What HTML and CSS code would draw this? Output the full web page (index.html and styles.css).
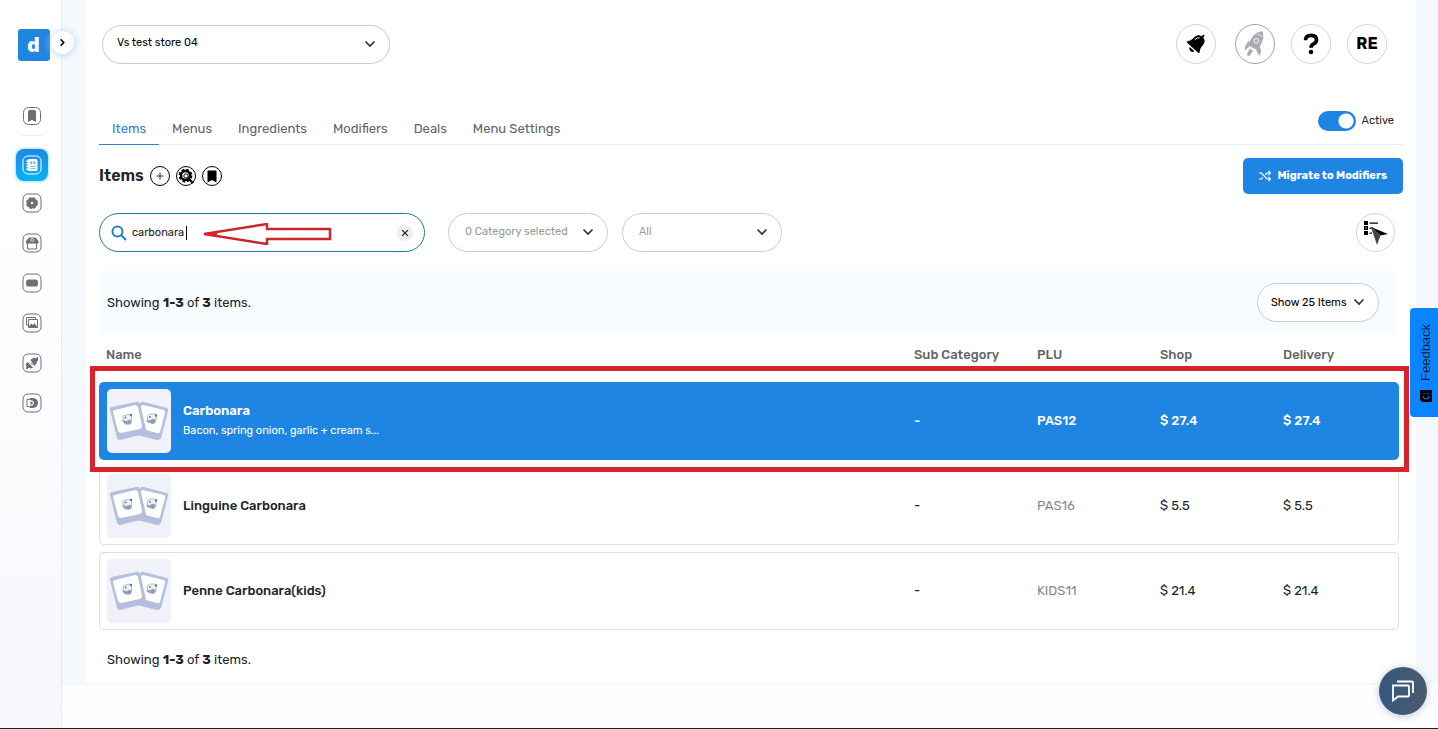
FILE: index.html
```html
<!DOCTYPE html>
<html lang="en">
<head>
    <meta charset="UTF-8">
    <meta name="viewport" content="width=device-width, initial-scale=1">
    <title>Items</title>
    <link rel="stylesheet" href="styles.css">
</head>
<body>
<svg class="defs" aria-hidden="true">
    <symbol id="chevron" viewBox="0 0 12 12"><path d="M1.500 3.500 6 8l4.500-4.500" fill="none" stroke="currentColor" stroke-width="1.700"/></symbol>
    <symbol id="bookmark" viewBox="0 0 12 12"><path d="M1.500 0h9v12L6 9.500 1.500 12z" fill="currentColor"/></symbol>
    <symbol id="thumb" viewBox="0 0 64 64">
        <g fill="#b4bfdd">
            <path d="M33 15 Q34 12 37 13 L60 19 Q62 20 61 22 L54 49 Q53 51 50 51 L30 46z"/>
            <path d="M3 21 Q2 19 5 18 L29 13 Q32 12 33 15 L39 43 Q39 45 37 45 L13 51 Q11 51 10 49z"/>
        </g>
        <path d="M6 23 Q6 21 8 21 L28 16 Q30 16 31 18 L35 37 Q35 39 33 40 L14 44 Q12 44 11 42z" fill="#fff"/>
        <path d="M34 18 Q34 16 36 16 L57 21 Q59 22 58 24 L53 43 Q52 45 50 44 L39 41z" fill="#fff"/>
        <g stroke="#a3adc6" stroke-width=".8">
            <path d="M16 27l6-2 2.500 2v6l-1.500 2h-5l-2-2z" fill="#eef1f8"/>
            <path d="M16 31q3 2 4.500 1 2-2 4 0l-1 3h-5l-2-2z" fill="#8f99b4"/>
            <path d="M40.500 27l2-2h6l1 2-1 6-2 1.500-6-2z" fill="#eef1f8"/>
            <path d="M40 31q3 1 4 0 2-2 4.500 0l-1 3-1.500.7-6-2z" fill="#8f99b4"/>
        </g>
        <circle cx="18.500" cy="28.500" r=".9" fill="#66718f"/>
        <circle cx="24" cy="26" r="1.200" fill="#66718f"/>
        <circle cx="43" cy="28" r=".9" fill="#66718f"/>
        <circle cx="49" cy="26.500" r="1.200" fill="#66718f"/>
    </symbol>
</svg>
<div class="app">
    <aside class="sidebar">
        <a class="logo" href="#">d</a>
        <button class="expand" aria-label="Expand menu"><svg viewBox="0 0 12 12"><path d="M4.500 3.500 7 6 4.500 8.500" fill="none" stroke="#000" stroke-width="1.200"/></svg></button>
        <nav class="side-nav">
            <a class="saved" href="#" aria-label="Bookmarks"><svg viewBox="0 0 20 20"><rect x="1.500" y="1.500" width="17" height="17" rx="5" fill="none" stroke="currentColor"/><path d="M6 5.500q0-1.500 1.500-1.500h5q1.500 0 1.500 1.500V16l-4-2-4 2z" fill="currentColor"/></svg></a>
            <a class="active" href="#" aria-label="Products"><svg viewBox="0 0 20 20"><rect x="1" y="1" width="18" height="18" rx="5" fill="none" stroke="currentColor"/><rect x="5.500" y="4" width="10" height="12" rx="1.500" fill="currentColor"/><path d="M4 6h3M4 8.700h3M4 11.300h3M4 14h3" stroke="currentColor"/><path d="M9.500 6.500v3M12.500 6.500v3M8.500 6.500v1.500h2M11.500 6.500v1.500h2M8.500 11.500h5M8.500 13.500h5" stroke="#3aa9ea" stroke-width=".7" fill="none"/></svg></a>
            <a href="#" aria-label="Settings"><svg viewBox="0 0 20 20"><rect x="1" y="1" width="18" height="18" rx="5" fill="none" stroke="currentColor"/><circle cx="10" cy="10" r="3.200" fill="none" stroke="currentColor" stroke-width="4"/><circle cx="10" cy="10" r="5" fill="none" stroke="currentColor" stroke-width="2" stroke-dasharray="2.700 1.230"/></svg></a>
            <a href="#" aria-label="Stores"><svg viewBox="0 0 20 20"><rect x="1" y="1" width="18" height="18" rx="5" fill="none" stroke="currentColor"/><path d="M4 10.500V8L7 4.500h6.500L16.500 8v2.500z" fill="currentColor"/><path d="M5.500 10v6h9v-6" fill="none" stroke="currentColor"/><circle cx="10.200" cy="7" r="1.500" fill="none" stroke="#fff" stroke-width=".7"/></svg></a>
            <a href="#" aria-label="Cards"><svg viewBox="0 0 20 20"><rect x="1" y="1" width="18" height="18" rx="5" fill="none" stroke="currentColor"/><rect x="4" y="6.500" width="12" height="7" rx="2.500" fill="currentColor"/></svg></a>
            <a href="#" aria-label="Gallery"><svg viewBox="0 0 20 20"><rect x="1" y="1" width="18" height="18" rx="5" fill="none" stroke="currentColor"/><path d="M13.500 6V4.500H4.500v7.500H6M6.500 6.500h9v8h-9z" fill="none" stroke="currentColor"/><path d="m6.500 14.500 2.500-4 2 1.500 1.500-2 3 4.500z" fill="currentColor"/></svg></a>
            <a href="#" aria-label="Integrations"><svg viewBox="0 0 20 20"><rect x="1" y="1" width="18" height="18" rx="5" fill="none" stroke="currentColor"/><path d="m9 7 3-2 1 1 2.500-1.500V7.500L14 8.500l.5 1-2 3zM5.500 9.500l5 5-2.500.5-1-1L4.500 16l.5-3-1-1zM8 9.500l2.500 2.500" fill="currentColor" stroke="currentColor"/></svg></a>
            <a href="#" aria-label="Tutorials"><svg viewBox="0 0 20 20"><rect x="1" y="1" width="18" height="18" rx="5" fill="none" stroke="currentColor"/><path d="M8 5h3a5 5 0 0 1 0 10H8l-1-2q5 0 5-3t-5-3z" fill="currentColor"/><path d="M7 6.500H5v7h2" fill="none" stroke="currentColor"/><path d="m8.500 8 3 2-3 2z" fill="currentColor"/></svg></a>
        </nav>
    </aside>

    <main class="main">
        <div class="card">
            <header class="topbar">
                <div class="picker store">
                    <select aria-label="Store"><option>Vs test store 04</option></select>
                    <svg><use href="#chevron"/></svg>
                </div>
                <div class="top-actions">
                    <button class="round" aria-label="Notifications"><svg viewBox="0 0 24 24"><g transform="rotate(42 12 12)"><path d="M12 1.500c4.500 0 6.500 3 6.500 7 0 4 1 5 2.500 7.500q.5 1.500-1 1.500H4q-1.500 0-1-1.500C4.500 13.500 5.500 12.500 5.500 8.500c0-4 2-7 6.500-7z"/><path d="M9 19h7q-1 3-3.500 3T9 19zM11-1h2v3h-2z"/><path d="M8 9.500Q8 5.500 10.500 4.500" fill="none" stroke="#fff"/></g></svg></button>
                    <button class="round rocket" aria-label="What's new"><svg viewBox="0 0 24 28"><g fill="#a9adb1"><path d="M20 0q2 7 0 11-2 5-5 10l-10-5q1-6 5-11 4-4 10-5z"/><path d="M6 10Q1 14 1 21l5-4zM17 17q3 4 0 10l-4-6zM6 19l4 2-4 6-3-1z"/></g><circle cx="13.500" cy="10.500" r="2.500" fill="none" stroke="#fff"/><path d="m14 3 6 3M5 16.500l9 4.500" stroke="#fff" stroke-width=".7"/></svg></button>
                    <button class="round help" aria-label="Help"><svg viewBox="0 0 16 24"><path d="M2 8Q2 2.500 8 2.500t6 5q0 3-3.500 4.500Q8 13.500 8 16" fill="none" stroke="#000" stroke-width="4"/><circle cx="8" cy="20.700" r="2.500"/></svg></button>
                    <button class="round user">RE</button>
                </div>
            </header>

            <div class="tab-bar">
                <nav class="tabs">
                    <a class="selected" href="#">Items</a>
                    <a href="#">Menus</a>
                    <a href="#">Ingredients</a>
                    <a href="#">Modifiers</a>
                    <a href="#">Deals</a>
                    <a href="#">Menu Settings</a>
                </nav>
                <label class="switch"><input type="checkbox" checked>Active</label>
            </div>

            <div class="title-row">
                <h1>Items</h1>
                <button class="mini" aria-label="Add item"><svg viewBox="0 0 12 12"><path d="M6 2.500v7M2.500 6h7" stroke="#333"/></svg></button>
                <button class="mini" aria-label="Item settings"><svg class="gear" viewBox="0 0 16 16"><circle cx="7.500" cy="7.500" r="4.500" fill="none" stroke="#000" stroke-width="2.400"/><circle cx="7.500" cy="7.500" r="6" fill="none" stroke="#000" stroke-width="1.800" stroke-dasharray="2.900 1.810"/><circle cx="8" cy="8" r="2.200" fill="none" stroke="#000"/><path d="m9.500 9.500 5.500 5.500" stroke="#000" stroke-width="2.200"/></svg></button>
                <button class="mini" aria-label="Save view"><svg class="mark"><use href="#bookmark"/></svg></button>
                <button class="migrate"><svg viewBox="0 0 12 12"><path d="M0 3h2.500L8 9h3M0 9h2.500l1.500-1.700M6.200 4.700 8 3h3M9.500 1l2 2-2 2M9.500 7l2 2-2 2" fill="none" stroke="#fff" stroke-width="1.200"/></svg>Migrate to Modifiers</button>
            </div>

            <div class="filters">
                <div class="search">
                    <svg class="glass" viewBox="0 0 16 16"><circle cx="6.500" cy="6.500" r="5" fill="none" stroke="#1c83c6" stroke-width="2"/><path d="m10 10 5 5" stroke="#1c83c6" stroke-width="2"/></svg>
                    <input type="text" aria-label="Search items" value="carbonara">
                    <span class="caret"></span>
                    <button class="clear" aria-label="Clear search"><svg viewBox="0 0 12 12"><path d="m2.500 2.500 7 7M9.500 2.500l-7 7" stroke="#222" stroke-width="1.500"/></svg></button>
                    <svg class="arrow" viewBox="0 0 130 22"><path d="M2 11 65 1v5h63v10H65v5z" fill="none" stroke="#c9262d" stroke-width="2.500"/><path d="m2 11 13-2v4z" fill="#ec1c24"/></svg>
                </div>
                <div class="picker category">
                    <select aria-label="Category"><option>0 Category selected</option></select>
                    <svg><use href="#chevron"/></svg>
                </div>
                <div class="picker">
                    <select aria-label="Status"><option>All</option></select>
                    <svg><use href="#chevron"/></svg>
                </div>
                <button class="round bulk" aria-label="Bulk select"><svg viewBox="0 0 24 24"><path d="M0 0h4v4H0zM0 10h4v4H0zM5.500 1.500H14v1.200H5.500zM5.500 6.500H9v1.200H5.500zM5.500 11.500H8v1.200H5.500z"/><path d="M.7 5.700h2.600v2.600H.7z" fill="none" stroke="#000" stroke-width="1.400"/><path d="m7 6 17 7-7.500 1.500z"/><path d="m7 6 9.500 8.500L13 24z" fill="#444"/></svg></button>
            </div>

            <div class="summary">
                <p>Showing <b>1-3</b> of <b>3</b> items.</p>
                <div class="picker page-size">
                    <select aria-label="Items per page"><option>Show 25 Items</option></select>
                    <svg><use href="#chevron"/></svg>
                </div>
            </div>

            <div class="list">
                <table>
                    <thead>
                    <tr>
                        <th>Name</th>
                        <th class="col">Sub Category</th>
                        <th class="col">PLU</th>
                        <th class="col">Shop</th>
                        <th class="col">Delivery</th>
                    </tr>
                    </thead>
                    <tbody>
                    <tr class="picked">
                        <td>
                            <div class="item">
                                <svg class="thumb"><use href="#thumb"/></svg>
                                <div>
                                    <strong>Carbonara</strong>
                                    <small>Bacon, spring onion, garlic + cream s...</small>
                                </div>
                            </div>
                        </td>
                        <td>-</td>
                        <td class="plu">PAS12</td>
                        <td>$ 27.4</td>
                        <td>$ 27.4</td>
                    </tr>
                    <tr>
                        <td>
                            <div class="item">
                                <svg class="thumb"><use href="#thumb"/></svg>
                                <strong>Linguine Carbonara</strong>
                            </div>
                        </td>
                        <td>-</td>
                        <td class="plu">PAS16</td>
                        <td>$ 5.5</td>
                        <td>$ 5.5</td>
                    </tr>
                    <tr>
                        <td>
                            <div class="item">
                                <svg class="thumb"><use href="#thumb"/></svg>
                                <strong>Penne Carbonara(kids)</strong>
                            </div>
                        </td>
                        <td>-</td>
                        <td class="plu">KIDS11</td>
                        <td>$ 21.4</td>
                        <td>$ 21.4</td>
                    </tr>
                    </tbody>
                </table>
                <div class="highlight"></div>
            </div>
            <p class="total">Showing <b>1-3</b> of <b>3</b> items.</p>
        </div>
    </main>
</div>

<button class="feedback"><svg viewBox="0 0 12 12"><path d="M0 0h12v12H2L0 10z"/><path d="M3 6q0 3 3 3t3-3M4 3v1.500M8 3v1.500" fill="none" stroke="#0a84ff"/></svg>Feedback</button>
<button class="chat" aria-label="Open chat"><svg viewBox="0 0 24 24"><path d="M2 6.500h15q1 0 1 1v9q0 1-1 1H7L2 21.500zM6 2.500h15q1 0 1 1V14" fill="none" stroke="#fff" stroke-width="1.800"/></svg></button>
</body>
</html>
```
FILE: styles.css
```css
*{
    box-sizing: border-box;
    margin: 0;
    padding: 0;
}
body{
    font-family: Rubik, Roboto, "Liberation Sans", sans-serif;
    font-size: 13px;
    line-height: 20px;
    color: #212529;
    background: #fefefe;
}
button, input, select{
    font: inherit;
    color: inherit;
    background: none;
    border: 0;
    outline: 0;
}
button{
    cursor: pointer;
}
a{
    color: inherit;
    text-decoration: none;
}
b{
    font-weight: 700;
}
.defs{
    display: none;
}
.app{
    display: flex;
    min-height: 100vh;
    border-bottom: 1px solid #222;
}

/* sidebar */
.sidebar{
    position: relative;
    display: flex;
    flex-direction: column;
    align-items: center;
    flex: none;
    width: 62px;
    padding: 29px 0 0 2px;
    background: linear-gradient(#fff 30%, #f5f7fb);
    border-right: 1px solid #e1ebf5;
}
.logo{
    width: 32px;
    height: 32px;
    margin-left: 4px;
    border-radius: 3px;
    background: #1e86e2;
    color: #fff;
    font: 800 20px/32px "Open Sans", sans-serif;
    text-align: center;
}
.expand{
    position: absolute;
    top: 31px;
    right: -13px;
    width: 23px;
    height: 23px;
    border-radius: 50%;
    background: #fff;
    box-shadow: 0 1px 8px #b9cfe4;
}
.expand svg{
    display: block;
    width: 15px;
    margin: auto;
}
.side-nav{
    display: flex;
    flex-direction: column;
    align-items: center;
    gap: 20px;
    margin-top: 45px;
    color: #6b7077;
}
.side-nav a{
    display: flex;
    width: 20px;
    height: 20px;
}
.side-nav svg{
    width: 20px;
    height: 20px;
}
.side-nav .saved{
    width: 32px;
    height: 30px;
    padding: 0 6px;
    border-bottom: 1px solid #eee;
    border-radius: 8px;
    margin-bottom: -7px;
}
.side-nav .active{
    width: 32px;
    height: 32px;
    padding: 6px;
    margin-bottom: -8px;
    border-radius: 8px;
    background: linear-gradient(#1e88e5, #04b4f0);
    box-shadow: 0 0 3px #38c4f8;
    color: #fff;
}

/* page */
.main{
    flex: 1;
    min-width: 0;
}
.card{
    background: #fff;
    padding: 24px 13px 0;
    border: solid #f5f9fe;
    border-width: 0 22px 2px 24px;
}
.topbar{
    display: flex;
    align-items: center;
    justify-content: space-between;
    padding: 0 16px 0 3px;
}
.top-actions{
    display: flex;
    gap: 16px;
}
.round{
    display: flex;
    align-items: center;
    justify-content: center;
    width: 40px;
    height: 40px;
    border: 1px solid #d6d6d6;
    border-radius: 50%;
}
.round svg{
    width: 22px;
    height: 22px;
}
.rocket{
    border-color: #a0a0a0;
    margin-left: 3px;
}
.rocket svg{
    width: 24px;
    height: 26px;
}
.user{
    color: #000;
    font-size: 16px;
    font-weight: 700;
}
.picker{
    position: relative;
    width: 160px;
    color: #999;
}
.picker select{
    display: block;
    appearance: none;
    width: 100%;
    height: 39px;
    padding: 0 36px 2px 16px;
    border: 1px solid #cacaca;
    border-radius: 20px;
    font-size: 11px;
}
.picker svg{
    position: absolute;
    top: 13px;
    right: 14px;
    width: 12px;
    height: 12px;
    color: #333;
    pointer-events: none;
}
.store{
    width: 288px;
    color: #000;
}
.store select{
    padding-left: 14px;
}

/* tabs */
.tab-bar{
    display: flex;
    justify-content: space-between;
    height: 34px;
    margin-top: 47px;
    border-bottom: 1px solid #e9edf0;
}
.tabs{
    display: flex;
}
.tabs a{
    height: 34px;
    padding: 8px 13px 0;
    color: #5f6368;
}
.tabs .selected{
    color: #2b83c6;
    border-bottom: 1px solid #2b83c6;
}
.switch{
    display: flex;
    gap: 6px;
    height: 20px;
    padding-right: 9px;
    font-size: 11px;
}
.switch input{
    appearance: none;
    width: 38px;
    height: 20px;
    border-radius: 10px;
    background: radial-gradient(circle at 28px 10px, #fff 7px, #1e86e2 8px);
}

/* title and filters */
.title-row{
    display: flex;
    align-items: center;
    gap: 6px;
    margin-top: 13px;
}
h1{
    font-size: 16px;
    font-weight: 600;
}
.mini{
    display: flex;
    align-items: center;
    justify-content: center;
    width: 20px;
    height: 20px;
    border: 1px solid #000;
    border-radius: 50%;
    color: #000;
}
.mini svg{
    width: 12px;
    height: 12px;
}
.mini .gear{
    width: 16px;
    height: 16px;
    flex: none;
}
.mini .mark{
    height: 13px;
}
.migrate{
    display: flex;
    align-items: center;
    gap: 6px;
    height: 36px;
    margin-left: auto;
    padding: 0 16px;
    border-radius: 5px;
    background: #1e86e2;
    color: #fff;
    font-size: 11px;
    font-weight: 700;
}
.migrate svg{
    width: 12px;
    height: 12px;
}
.filters{
    display: flex;
    gap: 14px;
    margin-top: 19px;
    padding-right: 8px;
}
.search{
    position: relative;
    display: flex;
    align-items: center;
    width: 326px;
    height: 39px;
    padding: 0 11px;
    border: 1px solid #23759f;
    border-radius: 20px;
}
.search input{
    flex: 1;
    min-width: 0;
    padding-left: 5px;
    font-size: 11px;
}
.glass{
    width: 16px;
    height: 16px;
}
.caret{
    position: absolute;
    left: 86px;
    top: 12px;
    width: 1px;
    height: 14px;
    background: #000;
}
.clear{
    width: 16px;
    height: 16px;
    border-radius: 50%;
    background: #eee;
}
.clear svg{
    display: block;
    width: 10px;
    margin: auto;
}
.arrow{
    position: absolute;
    left: 102px;
    top: 9px;
    width: 130px;
    height: 22px;
}
.category{
    margin-left: 9px;
}
.bulk{
    width: 39px;
    height: 39px;
    margin-left: auto;
}
.bulk svg{
    width: 24px;
    height: 24px;
}
.summary{
    display: flex;
    align-items: center;
    justify-content: space-between;
    margin: 19px 8px 0 0;
    padding: 12px 16px 12px 8px;
    background: #f6fcff;
}
.page-size{
    width: 122px;
    color: #000;
    background: #fff;
    border-radius: 20px;
}
.page-size select{
    padding: 0 28px 0 13px;
}

/* item list */
.list{
    position: relative;
    margin-right: 4px;
}
table{
    width: 100%;
    border-collapse: separate;
    border-spacing: 0 7px;
}
th{
    padding: 0 7px 6px;
    color: #666;
    font-weight: 500;
    line-height: 28px;
    text-align: left;
}
.col{
    width: 123px;
}
td{
    height: 78px;
    padding: 0 7px;
    border: solid #dedede;
    border-width: 1px 0;
}
td:first-child{
    border-left-width: 1px;
    border-radius: 5px 0 0 5px;
}
td:last-child{
    border-right-width: 1px;
    border-radius: 0 5px 5px 0;
}
.plu{
    color: #8a8a8a;
}
.item{
    display: flex;
    align-items: center;
    gap: 12px;
}
.item strong{
    display: block;
    font-weight: 500;
}
.item small{
    display: block;
    font-size: 11px;
    font-weight: 400;
}
.thumb{
    flex: none;
    width: 64px;
    height: 64px;
    border-radius: 5px;
    background: #f1f2f9;
}
.picked td{
    background: #1e86e2;
    border-color: #1e86e2;
    color: #fff;
    font-weight: 500;
}
.picked strong{
    font-weight: 600;
}
.highlight{
    position: absolute;
    top: 32px;
    left: -9px;
    right: -10px;
    height: 106px;
    border: 5px solid #d9232b;
    pointer-events: none;
}
.total{
    padding: 13px 8px;
}

/* floating buttons */
.feedback{
    position: fixed;
    top: 308px;
    right: 0;
    display: flex;
    align-items: center;
    gap: 9px;
    width: 28px;
    height: 109px;
    padding: 15px 4px 15px 0;
    border-radius: 0 4px 4px 0;
    background: #0a84ff;
    color: #0b1b33;
    font: 13px "Liberation Sans", sans-serif;
    writing-mode: vertical-rl;
    transform: rotate(180deg);
}
.feedback svg{
    width: 12px;
    height: 12px;
    transform: rotate(180deg);
}
.chat{
    position: fixed;
    right: 11px;
    bottom: 14px;
    display: flex;
    align-items: center;
    justify-content: center;
    width: 48px;
    height: 48px;
    border-radius: 50%;
    background: linear-gradient(90deg, #34587f, #4c5a6c);
    box-shadow: 0 1px 8px #bcc8d6;
}
.chat svg{
    width: 24px;
    height: 24px;
}
```
